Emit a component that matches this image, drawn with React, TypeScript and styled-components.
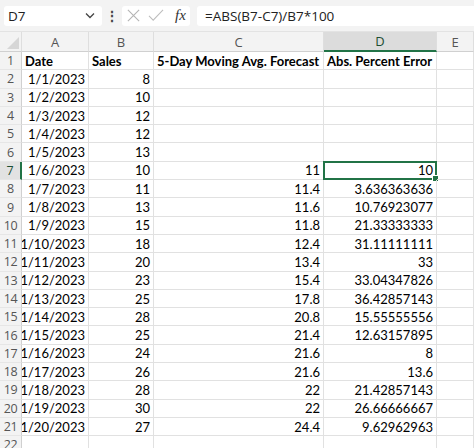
import React from 'react';
import styled, { createGlobalStyle } from 'styled-components';

const GlobalStyle = createGlobalStyle`
  html, body { margin: 0; padding: 0; background: #ffffff; }
  body { font-family: Lato, "Open Sans", sans-serif; overflow: hidden; }
`;

const GREEN = '#217346';
const COLS = '22px 67px 65px 170px 113px 1fr';
const ROW_H = 18.3;

const Page = styled.div`
  width: 474px;
  height: 448px;
  overflow: hidden;
  background: #ffffff;
`;

const Toolbar = styled.div`
  height: 32px;
  background: #f3f3f3;
  display: flex;
  align-items: center;
  padding: 0 0 0 4px;
  border-bottom: 1px solid #e3e3e3;
  box-sizing: border-box;
`;

const NameBox = styled.div`
  width: 98px;
  height: 20px;
  background: #ffffff;
  border-radius: 3px;
  display: flex;
  align-items: center;
  justify-content: space-between;
  padding: 0 7px 0 4px;
  box-sizing: border-box;
  font-family: "Open Sans", sans-serif;
  font-size: 13.5px;
  color: #222;
`;

const Dots = styled.div`
  width: 20px;
  display: flex;
  justify-content: center;
  color: #444;
  font-size: 14px;
  font-weight: bold;
`;

const FnBox = styled.div`
  width: 68px;
  height: 20px;
  background: #ffffff;
  border-radius: 3px;
  display: flex;
  align-items: center;
  padding: 0 4px;
  gap: 6px;
  box-sizing: border-box;
`;

const Fx = styled.span`
  font-family: "Liberation Serif", serif;
  font-style: italic;
  font-size: 15px;
  color: #333;
  margin-left: 4px;
`;

const FormulaBox = styled.div`
  flex: 1;
  height: 20px;
  margin-left: 7px;
  background: #ffffff;
  border-radius: 3px 0 0 3px;
  display: flex;
  align-items: center;
  padding-left: 8px;
  font-family: "Open Sans", sans-serif;
  font-size: 13.5px;
  color: #222;
`;

const Sheet = styled.div`
  display: grid;
  grid-template-columns: ${COLS};
  grid-auto-rows: ${ROW_H}px;
`;

const ColHeaderRow = styled.div`
  display: grid;
  grid-template-columns: ${COLS};
  height: 20px;
  background: #f3f3f3;
`;

const Corner = styled.div`
  position: relative;
  border-right: 1px solid #dedede;
  border-bottom: 1px solid #d0d0d0;
  &::after {
    content: '';
    position: absolute;
    right: 2px;
    bottom: 2px;
    border-style: solid;
    border-width: 0 0 12px 12px;
    border-color: transparent transparent #d6d6d6 transparent;
  }
`;

const ColHead = styled.div<{ $active?: boolean }>`
  display: flex;
  align-items: center;
  justify-content: center;
  font-family: "Open Sans", sans-serif;
  font-size: 13px;
  color: ${(p) => (p.$active ? '#1c4f33' : '#555')};
  background: ${(p) => (p.$active ? '#dcdcdc' : 'transparent')};
  border-right: 1px solid #dedede;
  border-bottom: ${(p) => (p.$active ? `2px solid ${GREEN}` : '1px solid #d0d0d0')};
  box-sizing: border-box;
`;

const RowHead = styled.div<{ $active?: boolean }>`
  display: flex;
  align-items: center;
  justify-content: center;
  background: ${(p) => (p.$active ? '#e2e2e2' : '#f3f3f3')};
  color: ${(p) => (p.$active ? '#1c4f33' : '#555')};
  font-family: "Open Sans", sans-serif;
  font-size: 12.5px;
  letter-spacing: -0.3px;
  border-right: ${(p) => (p.$active ? `2px solid ${GREEN}` : '1px solid #d0d0d0')};
  border-bottom: 1px solid #e6e6e6;
  box-sizing: border-box;
  position: relative;
  z-index: 1;
`;

const Cell = styled.div<{ $align?: 'left' | 'right'; $bold?: boolean }>`
  position: relative;
  display: flex;
  align-items: center;
  justify-content: ${(p) => (p.$align === 'left' ? 'flex-start' : 'flex-end')};
  padding: 0 3px;
  font-size: ${(p) => (p.$bold ? '13px' : '13px')};
  font-weight: ${(p) => (p.$bold ? 700 : 400)};
  color: #000;
  white-space: nowrap;
  border-right: 1px solid #e1e1e1;
  border-bottom: 1px solid #e1e1e1;
  box-sizing: border-box;
  min-width: 0;
`;

const SelBorder = styled.div`
  position: absolute;
  left: -1px;
  top: -1px;
  right: -1px;
  bottom: -1px;
  border: 2px solid ${GREEN};
  pointer-events: none;
  &::after {
    content: '';
    position: absolute;
    right: -4px;
    bottom: -4px;
    width: 5px;
    height: 5px;
    background: ${GREEN};
    border: 1px solid #fff;
  }
`;

const XIcon = () => (
  <svg width="15" height="15" viewBox="0 0 16 16">
    <path d="M2 2 L14 14 M14 2 L2 14" stroke="#b5b5b5" strokeWidth="1.2" fill="none" />
  </svg>
);

const CheckIcon = () => (
  <svg width="18" height="15" viewBox="0 0 18 16">
    <path d="M1.5 8.5 L6 13 L16.5 2" stroke="#bdbdbd" strokeWidth="1.1" fill="none" />
  </svg>
);

const Chevron = () => (
  <svg width="10" height="7" viewBox="0 0 10 7">
    <path d="M1 1.5 L5 5.5 L9 1.5" stroke="#444" strokeWidth="1.3" fill="none" />
  </svg>
);

const sales = [8, 10, 12, 12, 13, 10, 11, 13, 15, 18, 20, 23, 25, 28, 25, 24, 26, 28, 30, 27];
const forecast = ['', '', '', '', '', '11', '11.4', '11.6', '11.8', '12.4', '13.4', '15.4', '17.8', '20.8', '21.4', '21.6', '21.6', '22', '22', '24.4'];
const err = ['', '', '', '', '', '10', '3.636363636', '10.76923077', '21.33333333', '31.11111111', '33', '33.04347826', '36.42857143', '15.55555556', '12.63157895', '8', '13.6', '21.42857143', '26.66666667', '9.62962963'];

export default function App() {
  const rows: React.ReactNode[] = [];

  rows.push(
    <React.Fragment key="r1">
      <RowHead>1</RowHead>
      <Cell $align="left" $bold>Date</Cell>
      <Cell $align="left" $bold>Sales</Cell>
      <Cell $align="left" $bold>5-Day Moving Avg. Forecast</Cell>
      <Cell $align="left" $bold>Abs. Percent Error</Cell>
      <Cell />
    </React.Fragment>
  );

  sales.forEach((s, i) => {
    const n = i + 2;
    const active = n === 7;
    rows.push(
      <React.Fragment key={n}>
        <RowHead $active={active}>{n}</RowHead>
        <Cell>{`1/${i + 1}/2023`}</Cell>
        <Cell>{s}</Cell>
        <Cell>{forecast[i]}</Cell>
        <Cell>
          {err[i]}
          {active && <SelBorder />}
        </Cell>
        <Cell />
      </React.Fragment>
    );
  });

  rows.push(
    <React.Fragment key="r22">
      <RowHead>22</RowHead>
      <Cell />
      <Cell />
      <Cell />
      <Cell />
      <Cell />
    </React.Fragment>
  );

  return (
    <Page>
      <GlobalStyle />
      <Toolbar>
        <NameBox>
          <span>D7</span>
          <Chevron />
        </NameBox>
        <Dots>⋮</Dots>
        <FnBox>
          <XIcon />
          <CheckIcon />
          <Fx>fx</Fx>
        </FnBox>
        <FormulaBox>=ABS(B7-C7)/B7*100</FormulaBox>
      </Toolbar>
      <ColHeaderRow>
        <Corner />
        <ColHead>A</ColHead>
        <ColHead>B</ColHead>
        <ColHead>C</ColHead>
        <ColHead $active>D</ColHead>
        <ColHead>E</ColHead>
      </ColHeaderRow>
      <Sheet>{rows}</Sheet>
    </Page>
  );
}
